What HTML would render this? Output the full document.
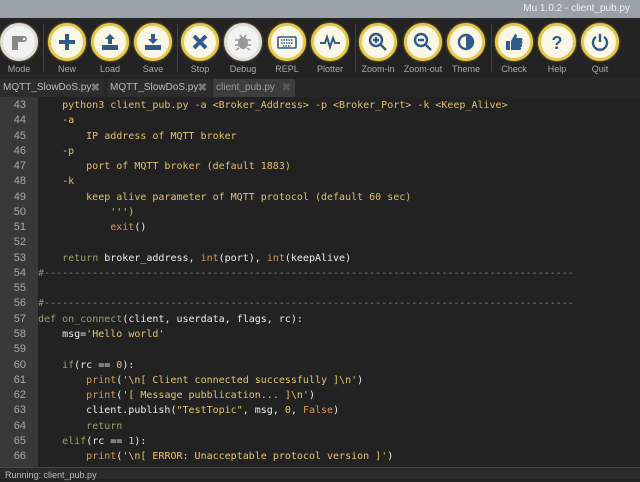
<!DOCTYPE html>
<html><head><meta charset="utf-8">
<style>
*{margin:0;padding:0;box-sizing:border-box}
body{width:640px;height:479px;overflow:hidden;background:#222;font-family:"Liberation Sans",sans-serif;position:relative}
#title{position:absolute;left:0;top:0;width:640px;height:18px;background:#9ba1a8;color:#eef0f2;font-size:10px;line-height:18px;text-align:right;padding-right:10px}
#tb{position:absolute;left:0;top:18px;width:640px;height:60px;background:#232323}
.b{position:absolute;top:5px;width:38px;height:38px;border-radius:50%;background:#fbf7e6;border:3px solid #e6c84e;box-shadow:0 0 2px #b89a30}
.b.g{border-color:#ddd;background:#f2f2f2}
.b svg{position:absolute;left:5px;top:5px;width:22px;height:22px}
.l{position:absolute;top:46px;width:50px;text-align:center;color:#aaa;font-size:9px}
.sep{position:absolute;top:6px;width:1px;height:48px;background:#444}
#tabs{position:absolute;left:0;top:78px;width:640px;height:19px;background:#262626}
.t{position:absolute;top:1px;height:18px;background:#2d2d2d;color:#bbb;font-size:10px;line-height:18px;padding-left:3px}
.t.a{background:#3d3d3d;color:#999}
.x{position:absolute;right:4px;top:0;color:#777;font-weight:bold;font-size:11px}
#ed{position:absolute;left:0;top:97px;width:640px;height:370px;background:#222}
#gut{position:absolute;left:0;top:0;width:38px;height:370px;background:#383838}
#code{position:absolute;left:0;top:1px;font-family:"DejaVu Sans Mono",monospace;font-size:10px;line-height:15.26px;white-space:pre;color:#ececec}
.n{display:inline-block;width:26px;text-align:right;color:#a9a9a9;margin-right:12px;font-family:"Liberation Sans",sans-serif;font-size:11px}
.k{color:#93a36a}.s{color:#e4c46e}.f{color:#d49a55}.c{color:#888}.d{color:#dcc070}
#st{position:absolute;left:0;top:467px;width:640px;height:12px;background:#2a2a2a;color:#bbb;font-size:9px;line-height:14px;padding-left:5px;border-top:1px solid #444}
</style></head><body>
<div id="title">Mu 1.0.2 - client_pub.py</div>
<div id="tb">
<div class="b g" style="left:0"><svg viewBox="0 0 22 22"><path d="M4 5h12a3 3 0 0 1 0 6h-6v8H4z" fill="#888"/><circle cx="16" cy="8" r="1.3" fill="#eee"/></svg></div>
<div class="b" style="left:48px"><svg viewBox="0 0 22 22"><path d="M11 3v16M3 11h16" stroke="#2e5b8a" stroke-width="4"/></svg></div>
<div class="b" style="left:91px"><svg viewBox="0 0 22 22"><path d="M11 3l-5 5h3v5h4V8h3z M3 14h16v5H3z" fill="#2e5b8a"/></svg></div>
<div class="b" style="left:134px"><svg viewBox="0 0 22 22"><path d="M9 3h4v5h3l-5 5-5-5h3z M3 14h16v5H3z" fill="#2e5b8a"/></svg></div>
<div class="b" style="left:181px"><svg viewBox="0 0 22 22"><path d="M5 5l12 12M17 5L5 17" stroke="#2e5b8a" stroke-width="4"/></svg></div>
<div class="b g" style="left:224px"><svg viewBox="0 0 22 22"><ellipse cx="11" cy="12" rx="5" ry="6" fill="#999"/><path d="M3 9h4M15 9h4M3 14h4M15 14h4M4 19l3-2M18 19l-3-2M8 4l2 3M14 4l-2 3" stroke="#999" stroke-width="1.6"/></svg></div>
<div class="b" style="left:268px"><svg viewBox="0 0 22 22"><rect x="2" y="6" width="18" height="11" rx="1" fill="none" stroke="#2e5b8a" stroke-width="1.6"/><path d="M5 9h12M5 12h12M7 15h8" stroke="#2e5b8a" stroke-width="1.4" stroke-dasharray="1.5 1"/></svg></div>
<div class="b" style="left:311px"><svg viewBox="0 0 22 22"><path d="M1 12h5l2-6 3 10 3-9 2 5h5" fill="none" stroke="#2e5b8a" stroke-width="2"/></svg></div>
<div class="b" style="left:359px"><svg viewBox="0 0 22 22"><circle cx="9" cy="9" r="6" fill="none" stroke="#2e5b8a" stroke-width="2.4"/><path d="M13 13l6 6M6 9h6M9 6v6" stroke="#2e5b8a" stroke-width="2.4"/></svg></div>
<div class="b" style="left:404px"><svg viewBox="0 0 22 22"><circle cx="9" cy="9" r="6" fill="none" stroke="#2e5b8a" stroke-width="2.4"/><path d="M13 13l6 6M6 9h6" stroke="#2e5b8a" stroke-width="2.4"/></svg></div>
<div class="b" style="left:447px"><svg viewBox="0 0 22 22"><circle cx="11" cy="11" r="7" fill="none" stroke="#2e5b8a" stroke-width="2.4"/><path d="M11 4a7 7 0 0 1 0 14z" fill="#2e5b8a"/></svg></div>
<div class="b" style="left:495px"><svg viewBox="0 0 22 22"><path d="M3 10h4v9H3z M8 10l4-7c2 0 2 2 1.5 4H18a1.5 1.5 0 0 1 0 3 1.5 1.5 0 0 1 0 3 1.5 1.5 0 0 1-1 3 1.5 1.5 0 0 1-1 3H8z" fill="#2e5b8a"/></svg></div>
<div class="b" style="left:538px"><svg viewBox="0 0 22 22"><text x="11" y="18" text-anchor="middle" font-family="Liberation Sans" font-weight="bold" font-size="18" fill="#2e5b8a">?</text></svg></div>
<div class="b" style="left:581px"><svg viewBox="0 0 22 22"><path d="M7 6a7 7 0 1 0 8 0" fill="none" stroke="#2e5b8a" stroke-width="2.4"/><path d="M11 3v8" stroke="#2e5b8a" stroke-width="2.4"/></svg></div>
<div class="sep" style="left:43px"></div><div class="sep" style="left:177px"></div><div class="sep" style="left:355px"></div><div class="sep" style="left:491px"></div>
<div class="l" style="left:-6px">Mode</div><div class="l" style="left:42px">New</div><div class="l" style="left:85px">Load</div><div class="l" style="left:128px">Save</div><div class="l" style="left:175px">Stop</div><div class="l" style="left:218px">Debug</div><div class="l" style="left:262px">REPL</div><div class="l" style="left:305px">Plotter</div><div class="l" style="left:353px">Zoom-in</div><div class="l" style="left:398px">Zoom-out</div><div class="l" style="left:441px">Theme</div><div class="l" style="left:489px">Check</div><div class="l" style="left:532px">Help</div><div class="l" style="left:575px">Quit</div>
</div>
<div id="tabs">
<div class="t" style="left:0;width:104px">MQTT_SlowDoS.py<span class="x">✖</span></div>
<div class="t" style="left:107px;width:104px">MQTT_SlowDoS.py<span class="x">✖</span></div>
<div class="t a" style="left:213px;width:82px">client_pub.py<span class="x" style="color:#555">✖</span></div>
</div>
<div id="ed"><div id="gut"></div>
<div id="code"><span class="n">43</span><span class="d">    python3 client_pub.py -a &lt;Broker_Address&gt; -p &lt;Broker_Port&gt; -k &lt;Keep_Alive&gt;</span>
<span class="n">44</span><span class="d">    -a</span>
<span class="n">45</span><span class="d">        IP address of MQTT broker</span>
<span class="n">46</span><span class="d">    -p</span>
<span class="n">47</span><span class="d">        port of MQTT broker (default 1883)</span>
<span class="n">48</span><span class="d">    -k</span>
<span class="n">49</span><span class="d">        keep alive parameter of MQTT protocol (default 60 sec)</span>
<span class="n">50</span><span class="d">            ''')</span>
<span class="n">51</span>            <span class="f">exit</span>()
<span class="n">52</span>
<span class="n">53</span>    <span class="k">return</span> broker_address, <span class="f">int</span>(port), <span class="f">int</span>(keepAlive)
<span class="n">54</span><span class="c">#----------------------------------------------------------------------------------------</span>
<span class="n">55</span>
<span class="n">56</span><span class="c">#----------------------------------------------------------------------------------------</span>
<span class="n">57</span><span class="k">def</span> <span class="k">on_connect</span>(client, userdata, flags, rc):
<span class="n">58</span>    msg=<span class="s">'Hello world'</span>
<span class="n">59</span>
<span class="n">60</span>    <span class="k">if</span>(rc == <span class="s">0</span>):
<span class="n">61</span>        <span class="f">print</span>(<span class="s">'\n[ Client connected successfully ]\n'</span>)
<span class="n">62</span>        <span class="f">print</span>(<span class="s">'[ Message pubblication... ]\n'</span>)
<span class="n">63</span>        client.publish(<span class="s">"TestTopic"</span>, msg, <span class="s">0</span>, <span class="f">False</span>)
<span class="n">64</span>        <span class="k">return</span>
<span class="n">65</span>    <span class="k">elif</span>(rc == <span class="s">1</span>):
<span class="n">66</span>        <span class="f">print</span>(<span class="s">'\n[ ERROR: Unacceptable protocol version ]'</span>)</div>
</div>
<div id="st">Running: client_pub.py</div>
</body></html>
